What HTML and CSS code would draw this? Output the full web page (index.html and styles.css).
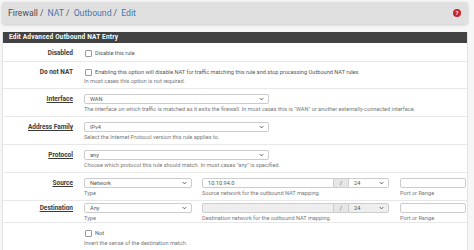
FILE: index.html
```html
<!DOCTYPE html>
<html lang="en">
<head>
    <meta charset="UTF-8">
    <title>Firewall / NAT / Outbound / Edit</title>
    <link rel="stylesheet" href="styles.css">
</head>
<body>
    <div class="page">
        <div class="crumbbar">
            <ol class="crumbs">
                <li>Firewall</li>
                <li><a href="#">NAT</a></li>
                <li><a href="#">Outbound</a></li>
                <li class="last"><a href="#">Edit</a></li>
            </ol>
            <span class="help-icon">?</span>
        </div>

        <div class="panel">
            <div class="panel-heading">Edit Advanced Outbound NAT Entry</div>

            <div class="row">
                <div class="row-label">Disabled</div>
                <div class="row-field">
                    <label class="check"><span class="box"></span>Disable this rule</label>
                </div>
            </div>

            <div class="row">
                <div class="row-label">Do not NAT</div>
                <div class="row-field">
                    <label class="check"><span class="box"></span>Enabling this option will disable NAT for traffic matching this rule and stop processing Outbound NAT rules</label>
                    <div class="help tight">In most cases this option is not required.</div>
                </div>
            </div>

            <div class="row">
                <div class="row-label"><u>Interface</u></div>
                <div class="row-field">
                    <div class="select wide">WAN<svg class="caret" viewBox="0 0 6 4"><path d="M1 1l2 2 2-2"/></svg></div>
                    <div class="help">The interface on which traffic is matched as it exits the firewall. In most cases this is "WAN" or another externally-connected interface.</div>
                </div>
            </div>

            <div class="row">
                <div class="row-label"><u>Address Family</u></div>
                <div class="row-field">
                    <div class="select wide">IPv4<svg class="caret" viewBox="0 0 6 4"><path d="M1 1l2 2 2-2"/></svg></div>
                    <div class="help">Select the Internet Protocol version this rule applies to.</div>
                </div>
            </div>

            <div class="row">
                <div class="row-label"><u>Protocol</u></div>
                <div class="row-field">
                    <div class="select wide">any<svg class="caret" viewBox="0 0 6 4"><path d="M1 1l2 2 2-2"/></svg></div>
                    <div class="help">Choose which protocol this rule should match. In most cases "any" is specified.</div>
                </div>
            </div>

            <div class="row">
                <div class="row-label"><u>Source</u></div>
                <div class="row-field cols">
                    <div class="col-type">
                        <div class="select">Network<svg class="caret" viewBox="0 0 6 4"><path d="M1 1l2 2 2-2"/></svg></div>
                        <div class="help">Type</div>
                    </div>
                    <div class="col-addr">
                        <div class="group">
                            <div class="input addr">10.10.94.0</div>
                            <div class="addon">/</div>
                            <div class="select mask">24<svg class="caret" viewBox="0 0 6 4"><path d="M1 1l2 2 2-2"/></svg></div>
                        </div>
                        <div class="help">Source network for the outbound NAT mapping.</div>
                    </div>
                    <div class="col-port">
                        <div class="input"></div>
                        <div class="help">Port or Range</div>
                    </div>
                </div>
            </div>

            <div class="row row-dest">
                <div class="row-label"><u>Destination</u></div>
                <div class="row-field cols">
                    <div class="col-type">
                        <div class="select">Any<svg class="caret" viewBox="0 0 6 4"><path d="M1 1l2 2 2-2"/></svg></div>
                        <div class="help">Type</div>
                    </div>
                    <div class="col-addr">
                        <div class="group">
                            <div class="input addr disabled"></div>
                            <div class="addon">/</div>
                            <div class="select mask disabled">24<svg class="caret" viewBox="0 0 6 4"><path d="M1 1l2 2 2-2"/></svg></div>
                        </div>
                        <div class="help">Destination network for the outbound NAT mapping.</div>
                    </div>
                    <div class="col-port">
                        <div class="input"></div>
                        <div class="help">Port or Range</div>
                    </div>
                </div>
            </div>

            <div class="row last-row">
                <div class="row-label"></div>
                <div class="row-field">
                    <label class="check"><span class="box"></span>Not</label>
                    <div class="help">Invert the sense of the destination match.</div>
                </div>
            </div>
        </div>
    </div>
</body>
</html>
```

FILE: styles.css
```css
body {
    margin: 0;
    background: #f6f6f6;
    font-family: Roboto, "Liberation Sans", sans-serif;
    color: #333;
    font-size: 5.6px;
}

.page {
    padding: 2px 6px 0 2px;
}

/* breadcrumb bar */
.crumbbar {
    display: flex;
    align-items: center;
    justify-content: space-between;
    height: 22px;
    padding: 0 7px 0 6px;
    background: #e0e0e0;
    border-radius: 3px;
    box-shadow: 0 1px 3px rgba(0,0,0,0.18);
    margin-bottom: 8px;
}

.crumbs {
    display: flex;
    margin: 0;
    padding: 0;
    list-style: none;
    font-size: 8.7px;
    color: #4d4d4d;
}

.crumbs li::after {
    content: "/";
    padding: 0 4px 0 2px;
    color: #555;
}

.crumbs li.last::after {
    content: none;
}

.crumbs a {
    color: #3f77b3;
    text-decoration: none;
}

.help-icon {
    width: 8px;
    height: 8px;
    border-radius: 50%;
    background: #c4262b;
    color: #fff;
    font-size: 6px;
    font-weight: bold;
    line-height: 8px;
    text-align: center;
}

/* panel */
.panel {
    background: #fff;
    border-left: 1px solid #e4e4e4;
    border-right: 1px solid #e4e4e4;
}

.panel-heading {
    height: 11px;
    line-height: 11px;
    padding-left: 6px;
    background: #424242;
    color: #fff;
    font-size: 6.5px;
    font-weight: bold;
    letter-spacing: 0.2px;
}

.row {
    display: flex;
    padding: 5px 0 3px;
    border-bottom: 1px solid #e8e8e8;
}

.row-dest {
    padding: 2px 0 0;
}

.last-row {
    border-bottom: none;
}

.row-label {
    width: 75px;
    flex-shrink: 0;
    box-sizing: border-box;
    padding-right: 5px;
    text-align: right;
    font-size: 6.5px;
    font-weight: bold;
    line-height: 10px;
    color: #3a3a3a;
}

.row-field {
    flex: 1;
    padding-left: 6px;
}

.check {
    display: flex;
    align-items: center;
    height: 10px;
    color: #555;
}

.box {
    width: 5px;
    height: 5px;
    margin: 0 3px 0 1px;
    border: 1px solid #999;
    border-radius: 1px;
    background: #fff;
}

.help {
    margin-top: 1px;
    line-height: 8px;
    color: #777;
    white-space: nowrap;
}

.help.tight {
    margin-top: 0;
}

/* form controls */
.select,
.input {
    position: relative;
    box-sizing: border-box;
    height: 10px;
    padding-left: 5px;
    border: 1px solid #ccc;
    border-radius: 2px;
    background: #fff;
    line-height: 8px;
    color: #555;
}

.select.wide {
    width: 185px;
}

.caret {
    position: absolute;
    right: 4px;
    top: 2px;
    width: 5px;
    height: 4px;
    fill: none;
    stroke: #555;
    stroke-width: 1.2;
}

.cols {
    display: flex;
}

.col-type {
    width: 108px;
    margin-right: 10px;
}

.col-addr {
    width: 187px;
    margin-right: 11px;
}

.col-port {
    width: 66px;
}

.group {
    display: flex;
}

.group .addr {
    width: 132px;
    border-radius: 2px 0 0 2px;
}

.addon {
    box-sizing: border-box;
    width: 14px;
    height: 10px;
    border-top: 1px solid #ccc;
    border-bottom: 1px solid #ccc;
    background: #e6e6e6;
    line-height: 8px;
    text-align: center;
    color: #555;
}

.group .mask {
    width: 41px;
    border-radius: 0 2px 2px 0;
}

.disabled {
    background: #eee;
}
```
